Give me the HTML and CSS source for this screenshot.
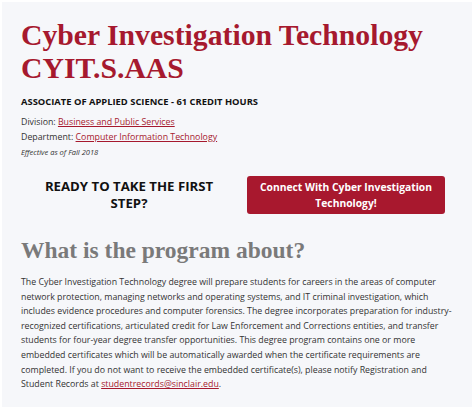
FILE: index.html
```html
<!DOCTYPE html>
<html>
<head>
<meta charset="utf-8">
<link rel="stylesheet" href="styles.css">
</head>
<body>
<div class="page">
  <h1 class="title">Cyber Investigation Technology<br>CYIT.S.AAS</h1>
  <p class="degree">ASSOCIATE OF APPLIED SCIENCE - 61 CREDIT HOURS</p>
  <p class="meta">Division: <a href="#">Business and Public Services</a></p>
  <p class="meta">Department: <a href="#">Computer Information Technology</a></p>
  <p class="effective">Effective as of Fall 2018</p>
  <div class="cta">
    <div class="cta-text">READY TO TAKE THE FIRST STEP?</div>
    <a class="cta-btn" href="#">Connect With Cyber Investigation Technology!</a>
  </div>
  <h2 class="section">What is the program about?</h2>
  <p class="body">The Cyber Investigation Technology degree will prepare students for careers in the areas of computer network protection, managing networks and operating systems, and IT criminal investigation, which includes evidence procedures and computer forensics. The degree incorporates preparation for industry-recognized certifications, articulated credit for Law Enforcement and Corrections entities, and transfer students for four-year degree transfer opportunities. This degree program contains one or more embedded certificates which will be automatically awarded when the certificate requirements are completed. If you do not want to receive the embedded certificate(s), please notify Registration and Student Records at <a href="#">studentrecords@sinclair.edu</a>.</p>
</div>
</body>
</html>
```
FILE: styles.css
```css
html, body { margin: 0; padding: 0; background: #ffffff; }
body { font-family: "Open Sans", "Liberation Sans", sans-serif; color: #333; }
.page {
  margin: 2px 2px 0 2px;
  height: 405px;
  background: #f6f7fa;
  padding: 17px 19px 0 19px;
  box-sizing: border-box;
  overflow: hidden;
}
.title {
  margin: 0;
  font-family: "Liberation Serif", serif;
  font-weight: bold;
  font-size: 29.7px;
  line-height: 33px;
  color: #a6192e;
}
.degree {
  margin: 10px 0 6px;
  font-weight: 700;
  font-size: 9.4px;
  line-height: 14px;
  color: #111;
}
.meta { margin: 0; font-size: 8.8px; line-height: 15px; color: #333; }
.meta a, .body a { color: #a6192e; text-decoration: underline; }
.effective { margin: 0; font-size: 7.5px; line-height: 14px; font-style: italic; color: #333; }
.cta {
  display: grid;
  grid-template-columns: 216px 198px;
  column-gap: 10px;
  align-items: center;
  margin-top: 17px;
}
.cta-text {
  text-align: center;
  font-weight: 700;
  font-size: 13.2px;
  line-height: 17px;
  color: #111;
  padding: 0 10px;
}
.cta-btn {
  display: block;
  background: #a8182e;
  color: #fff;
  text-decoration: none;
  text-align: center;
  font-weight: 700;
  font-size: 10.3px;
  line-height: 16px;
  padding: 3px 10px;
  border-radius: 3px;
}
.section {
  margin: 22px 0 0;
  font-family: "Liberation Serif", serif;
  font-weight: bold;
  font-size: 23.5px;
  line-height: 28px;
  color: #7a7a7a;
}
.body { margin: 11px 0 0; font-size: 8.8px; line-height: 14.6px; color: #333; }
```
